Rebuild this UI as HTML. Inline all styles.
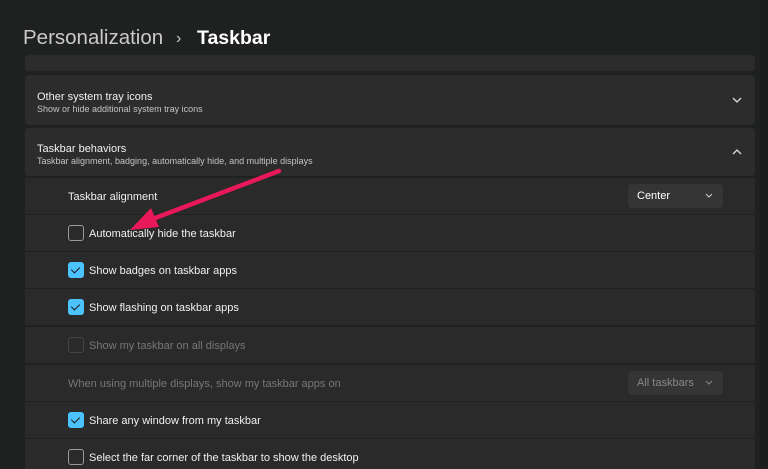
<!DOCTYPE html>
<html><head><style>
*{margin:0;padding:0;box-sizing:border-box}
body{width:768px;height:466px;overflow:hidden;background:#1f2020;font-family:"Liberation Sans",sans-serif;position:relative;color:#fff}
.strip{position:absolute;left:760px;top:0;width:8px;height:466px;background:#1a1c1b}
.t{position:absolute;top:26px;font-size:21px}
.card{position:absolute;left:25px;width:730px;background:#2b2c2b;border-radius:4px}
.row{position:absolute;left:25px;width:730px;height:36px;background:#292a29}
.lbl{position:absolute;font-size:11px;color:#f0f0f0}
.sub{position:absolute;font-size:9px;color:#c4c4c4}
.cb{position:absolute;left:68px;width:16px;height:16px;border-radius:3px;border:1px solid #9a9a9a}
.cb.on{background:#4cc2ff;border:none}
.cb.on:after{content:"";position:absolute;left:5px;top:3px;width:4px;height:7px;border:solid #1a1a1a;border-width:0 1.5px 1.5px 0;transform:rotate(45deg)}
.cb.dis{border-color:#444}
.dd{position:absolute;left:628px;width:95px;height:24px;background:#343534;border-radius:4px;font-size:11px;padding:6px 0 0 9px}
.dd svg{position:absolute;right:10px;top:9px}
</style></head><body>
<div class="strip"></div>
<div class="t" style="left:23px;color:#c9c9c9;font-size:20.5px">Personalization</div>
<div class="t" style="left:176px;color:#ccc;font-size:16px;top:30px">›</div>
<div class="t" style="left:197px;font-weight:bold;font-size:19.5px;top:27px">Taskbar</div>
<div class="card" style="top:55px;height:16px"></div>
<div class="card" style="top:75px;height:50px"></div>
<div class="lbl" style="left:37px;top:91px">Other system tray icons</div>
<div class="sub" style="left:37px;top:104px">Show or hide additional system tray icons</div>
<svg style="position:absolute;left:732px;top:97px" width="10" height="6"><path d="M1 1L5 5L9 1" stroke="#ddd" fill="none" stroke-width="1.3"/></svg>
<div class="card" style="top:128px;height:48px"></div>
<div class="lbl" style="left:37px;top:143px">Taskbar behaviors</div>
<div class="sub" style="left:37px;top:156px">Taskbar alignment, badging, automatically hide, and multiple displays</div>
<svg style="position:absolute;left:732px;top:149px" width="10" height="6"><path d="M1 5L5 1L9 5" stroke="#ddd" fill="none" stroke-width="1.3"/></svg>

<div class="row" style="top:178px"></div>
<div class="lbl" style="left:68px;top:191px">Taskbar alignment</div>
<div class="dd" style="top:184px">Center<svg width="8" height="5"><path d="M1 1L4 4L7 1" stroke="#ccc" fill="none"/></svg></div>
<div class="row" style="top:215px"></div>
<div class="cb" style="top:225px"></div><div class="lbl" style="left:89px;top:228px">Automatically hide the taskbar</div>
<div class="row" style="top:252px"></div>
<div class="cb on" style="top:262px"></div><div class="lbl" style="left:89px;top:265px">Show badges on taskbar apps</div>
<div class="row" style="top:289px"></div>
<div class="cb on" style="top:299px"></div><div class="lbl" style="left:89px;top:302px">Show flashing on taskbar apps</div>
<div class="row" style="top:327px"></div>
<div class="cb dis" style="top:337px"></div><div class="lbl" style="left:89px;top:340px;color:#777">Show my taskbar on all displays</div>
<div class="row" style="top:365px"></div>
<div class="lbl" style="left:68px;top:378px;color:#777">When using multiple displays, show my taskbar apps on</div>
<div class="dd" style="top:371px;color:#888">All taskbars<svg width="8" height="5"><path d="M1 1L4 4L7 1" stroke="#888" fill="none"/></svg></div>
<div class="row" style="top:402px"></div>
<div class="cb on" style="top:412px"></div><div class="lbl" style="left:89px;top:415px">Share any window from my taskbar</div>
<div class="row" style="top:439px;height:30px"></div>
<div class="cb" style="top:449px"></div><div class="lbl" style="left:89px;top:452px">Select the far corner of the taskbar to show the desktop</div>
<svg style="position:absolute;left:0;top:0" width="768" height="466">
<path d="M279 171L150 220" stroke="#e8185b" stroke-width="4.5" stroke-linecap="round"/>
<path d="M130 230L151 208L159 227Z" fill="#e8185b"/>
</svg>
</body></html>
